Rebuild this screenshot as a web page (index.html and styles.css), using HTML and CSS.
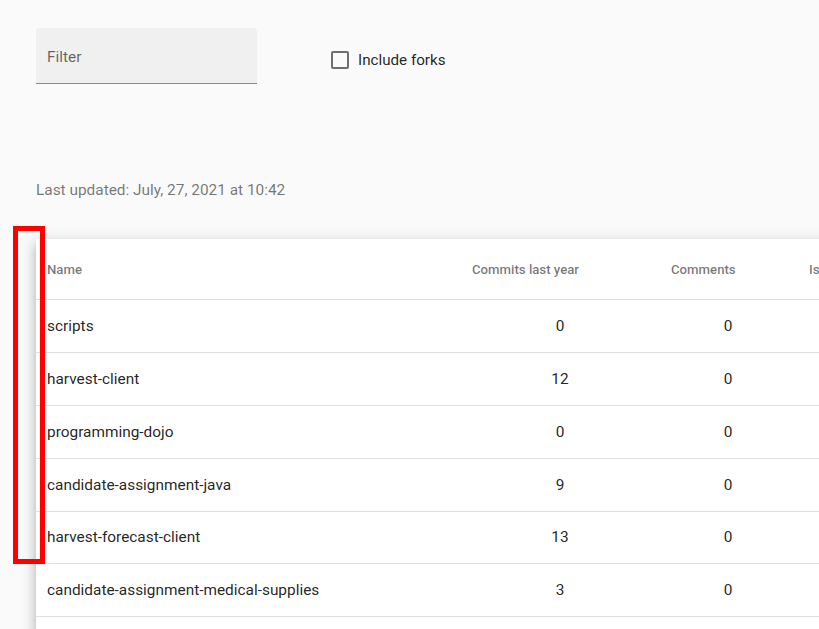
FILE: index.html
```html
<!DOCTYPE html>
<html lang="en">
<head>
<meta charset="utf-8">
<title>Repositories</title>
<link rel="stylesheet" href="styles.css">
</head>
<body>
<div class="page">
  <div class="controls">
    <div class="filter"><span class="filter-label">Filter</span></div>
    <label class="checkbox"><span class="box"></span><span class="check-label">Include forks</span></label>
  </div>
  <p class="updated">Last updated: July, 27, 2021 at 10:42</p>
  <div class="card">
    <div class="row head">
      <div class="c-name">Name</div>
      <div class="c-commits">Commits last year</div>
      <div class="c-comments">Comments</div>
      <div class="c-issues">Issues</div>
    </div>
    <div class="row">
      <div class="c-name">scripts</div>
      <div class="c-commits">0</div>
      <div class="c-comments">0</div>
      <div class="c-issues"></div>
    </div>
    <div class="row">
      <div class="c-name">harvest-client</div>
      <div class="c-commits">12</div>
      <div class="c-comments">0</div>
      <div class="c-issues"></div>
    </div>
    <div class="row">
      <div class="c-name">programming-dojo</div>
      <div class="c-commits">0</div>
      <div class="c-comments">0</div>
      <div class="c-issues"></div>
    </div>
    <div class="row">
      <div class="c-name">candidate-assignment-java</div>
      <div class="c-commits">9</div>
      <div class="c-comments">0</div>
      <div class="c-issues"></div>
    </div>
    <div class="row">
      <div class="c-name">harvest-forecast-client</div>
      <div class="c-commits">13</div>
      <div class="c-comments">0</div>
      <div class="c-issues"></div>
    </div>
    <div class="row">
      <div class="c-name">candidate-assignment-medical-supplies</div>
      <div class="c-commits">3</div>
      <div class="c-comments">0</div>
      <div class="c-issues"></div>
    </div>
  </div>
</div>
<div class="highlight"></div>
</body>
</html>
```

FILE: styles.css
```css
html, body {
  margin: 0;
  padding: 0;
  background: #fafafa;
  overflow: hidden;
  height: 629px;
}
body {
  font-family: Roboto, "Liberation Sans", Arial, sans-serif;
  color: rgba(0, 0, 0, 0.87);
  position: relative;
}
.page {
  padding-left: 36px;
}
.controls {
  display: flex;
  align-items: flex-start;
  padding-top: 28px;
}
.filter {
  width: 210px;
  height: 35px;
  padding: 20px 0 0 11px;
  background: #f0f0f0;
  border-radius: 4px 4px 0 0;
  border-bottom: 1px solid #8c8c8c;
  box-sizing: content-box;
}
.filter-label {
  display: block;
  font-size: 15.4px;
  color: rgba(0, 0, 0, 0.6);
  line-height: 18px;
}
.checkbox {
  display: flex;
  align-items: center;
  margin-left: 74px;
  margin-top: 23px;
  gap: 9px;
}
.box {
  width: 14px;
  height: 14px;
  border: 2px solid #6f6f6f;
  border-radius: 2px;
}
.check-label {
  font-size: 15.2px;
  line-height: 18px;
}
.updated {
  margin: 97px 0 0;
  font-size: 15.4px;
  line-height: 18px;
  color: rgba(0, 0, 0, 0.54);
}
.card {
  margin-top: 40px;
  width: 1000px;
  padding-bottom: 60px;
  background: #fff;
  box-shadow: 0 5px 5px -3px rgba(0, 0, 0, 0.2), 0 8px 10px 1px rgba(0, 0, 0, 0.14), 0 3px 14px 2px rgba(0, 0, 0, 0.12);
}
.row {
  display: grid;
  grid-template-columns: 416px 216px 120px 248px;
  align-items: center;
  height: 52.8px;
  box-sizing: border-box;
  border-bottom: 1px solid #e0e0e0;
  font-size: 15.4px;
}
.row.head {
  height: 61.4px;
  font-size: 13.2px;
  font-weight: 500;
  color: rgba(0, 0, 0, 0.54);
}
.c-name {
  padding-left: 11px;
}
.c-commits, .c-comments {
  text-align: center;
}
.head .c-commits {
  text-align: left;
  padding-left: 20px;
}
.head .c-comments {
  text-align: left;
  padding-left: 3px;
}
.head .c-issues {
  padding-left: 21px;
}
.highlight {
  position: absolute;
  left: 13px;
  top: 226px;
  width: 32px;
  height: 338px;
  box-sizing: border-box;
  border: 5px solid #ff0000;
}
```
